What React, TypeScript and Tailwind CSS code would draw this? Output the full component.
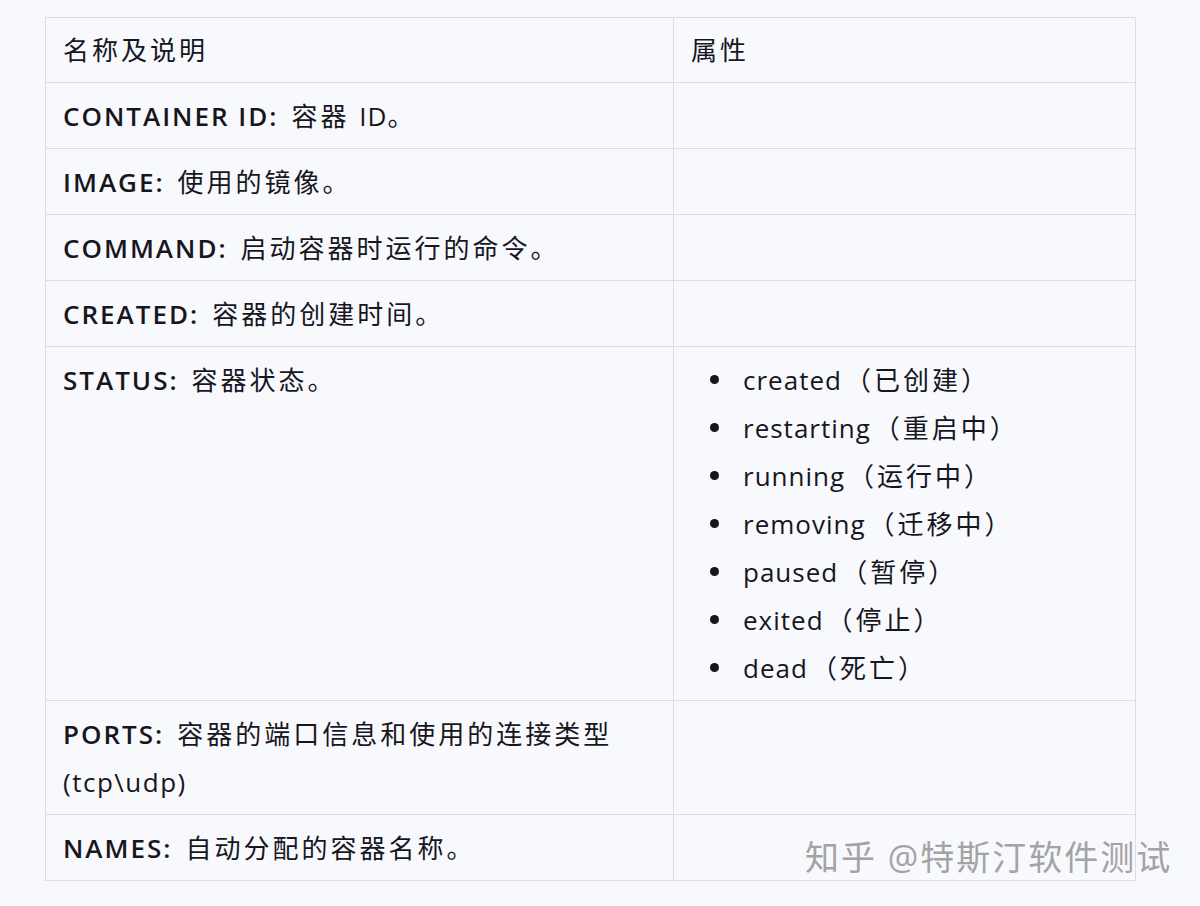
import React from "react";

const FONT = {
  fontFamily: '"Open Sans", "Noto Sans CJK SC", sans-serif',
};

const ROWS: { key: string; desc: React.ReactNode; list?: string[] }[] = [
  { key: "CONTAINER ID", desc: <>容器 <span className="tracking-[1px]">ID</span>。</> },
  { key: "IMAGE", desc: "使用的镜像。" },
  { key: "COMMAND", desc: "启动容器时运行的命令。" },
  { key: "CREATED", desc: "容器的创建时间。" },
  {
    key: "STATUS",
    desc: "容器状态。",
    list: [
      "created|（已创建）",
      "restarting|（重启中）",
      "running|（运行中）",
      "removing|（迁移中）",
      "paused|（暂停）",
      "exited|（停止）",
      "dead|（死亡）",
    ],
  },
  {
    key: "PORTS",
    desc: (
      <>
        容器的端口信息和使用的连接类型
        <br />
        <span className="tracking-[1.5px]">(tcp\udp)</span>
      </>
    ),
  },
  { key: "NAMES", desc: "自动分配的容器名称。" },
];

export default function App() {
  return (
    <div
      className="relative w-[1200px] h-[906px] bg-[#f8f9fc] pt-[17px] pl-[45px] text-[#17161e]"
      style={FONT}
    >
      <table className="w-[1091px] border-collapse text-[26px] leading-[48px] tracking-[3px]">
        <colgroup>
          <col className="w-[628px]" />
          <col />
        </colgroup>
        <thead>
          <tr>
            <th className="border border-[#dcdde2] px-[17px] py-[8px] text-left font-normal">
              名称及说明
            </th>
            <th className="border border-[#dcdde2] px-[17px] py-[8px] text-left font-normal">
              属性
            </th>
          </tr>
        </thead>
        <tbody>
          {ROWS.map((r) => (
            <tr key={r.key}>
              <td className="border border-[#dcdde2] px-[17px] py-[8.5px] align-top">
                <span className="font-semibold tracking-[2px]">{r.key}:</span>
                <span className="ml-[13px]">{r.desc}</span>
              </td>
              <td className="border border-[#dcdde2] px-[17px] py-[8.5px] align-top">
                {r.list && (
                  <ul>
                    {r.list.map((item) => {
                      const [en, zh] = item.split("|");
                      return (
                        <li key={en} className="flex items-center">
                          <span className="ml-[19px] mr-[24px] w-[9px] h-[9px] rounded-full bg-[#17161e]" />
                          <span className="tracking-[1px]">{en}</span>
                          <span className="ml-[3px]">{zh}</span>
                        </li>
                      );
                    })}
                  </ul>
                )}
              </td>
            </tr>
          ))}
        </tbody>
      </table>
      <div className="absolute left-[805px] top-[837px] text-[34px] leading-[40px] tracking-[2px] text-[#a3a3a6]">
        知乎 @特斯汀软件测试
      </div>
    </div>
  );
}
